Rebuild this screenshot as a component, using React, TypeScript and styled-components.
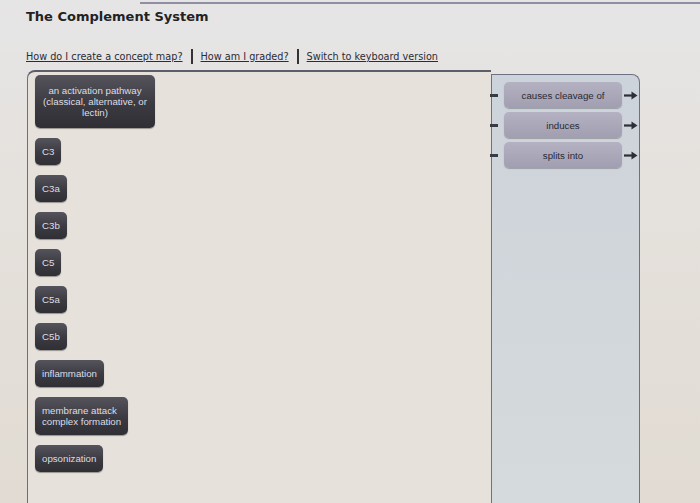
import styled, { createGlobalStyle } from "styled-components";

const GlobalStyle = createGlobalStyle`
  html, body {
    margin: 0;
    padding: 0;
    background: #e4e0da;
  }
  #root {
    width: 700px;
    height: 503px;
    overflow: hidden;
  }
`;

const Page = styled.div`
  width: 700px;
  height: 503px;
  display: flex;
  flex-direction: column;
  background: linear-gradient(180deg, #e6e5e6 0%, #e5e1dc 40%, #e1dbd3 100%);
  font-family: "Liberation Sans", Arial, sans-serif;
`;

const TopRule = styled.div`
  height: 2px;
  margin-top: 2px;
  margin-left: 140px;
  background: #8f8ea3;
`;

const Title = styled.h1`
  margin: 5px 0 0 26px;
  font-family: "DejaVu Sans", Verdana, sans-serif;
  font-size: 13px;
  font-weight: bold;
  color: #222;
`;

const LinkBar = styled.div`
  display: flex;
  align-items: center;
  margin: 25px 0 0 26px;
  font-family: "DejaVu Sans", Verdana, sans-serif;
  font-size: 9.7px;
`;

const HelpLink = styled.a`
  color: #2c2c34;
  text-decoration: underline;
  cursor: pointer;
`;

const Divider = styled.span`
  display: inline-block;
  width: 2px;
  height: 15px;
  margin: 0 8px;
  background: #333;
`;

const Panel = styled.div`
  flex: 1;
  display: flex;
  margin: 6px 60px 0 27px;
`;

const Canvas = styled.div`
  flex: 1;
  display: flex;
  flex-direction: column;
  align-items: flex-start;
  gap: 10px;
  padding: 3px 0 0 7px;
  border-top: 2px solid #5e5d6a;
  border-left: 1px solid #6f6e7c;
  border-top-left-radius: 8px;
  background: #e6e2db;
`;

const Node = styled.div<{ $wide?: boolean }>`
  box-sizing: border-box;
  width: ${(p) => (p.$wide ? "120px" : "auto")};
  min-width: 24px;
  padding: ${(p) => (p.$wide ? "10px 4px" : "8px 7px")};
  border-radius: 5px;
  background: linear-gradient(180deg, #55545c 0%, #3b3a41 55%, #2f2f35 100%);
  box-shadow: 0 1px 1px rgba(0, 0, 0, 0.35);
  color: #dedee3;
  font-size: 9.7px;
  line-height: 11px;
  text-align: ${(p) => (p.$wide ? "center" : "left")};
  white-space: pre-line;
  cursor: grab;
`;

const Sidebar = styled.div`
  width: 147px;
  margin-top: 4px;
  display: flex;
  flex-direction: column;
  gap: 4px;
  padding-top: 7px;
  border: 1px solid #707084;
  border-bottom: none;
  border-top-right-radius: 8px;
  background: linear-gradient(180deg, #cdd3da 0%, #d5dadc 100%);
`;

const LinkRow = styled.div`
  display: flex;
  align-items: center;
`;

const Dash = styled.span`
  width: 8px;
  height: 3px;
  margin-left: -2px;
  background: #3a3a44;
`;

const LinkPill = styled.div`
  width: 118px;
  height: 26px;
  margin-left: 6px;
  display: flex;
  align-items: center;
  justify-content: center;
  border-radius: 5px;
  background: linear-gradient(180deg, #b4b1c2 0%, #a19eb1 100%);
  box-shadow: 0 1px 1px rgba(0, 0, 0, 0.25);
  color: #2a2a33;
  font-size: 9.7px;
  cursor: grab;
`;

const Arrow = () => (
  <svg width="14" height="9" viewBox="0 0 14 9" style={{ marginLeft: 2 }}>
    <path d="M0 4.5 H10" stroke="#2e2e38" strokeWidth="2.2" />
    <path d="M7.5 0.5 L13.5 4.5 L7.5 8.5 Z" fill="#2e2e38" />
  </svg>
);

const concepts = [
  { label: "an activation pathway\n(classical, alternative, or\nlectin)", wide: true },
  { label: "C3" },
  { label: "C3a" },
  { label: "C3b" },
  { label: "C5" },
  { label: "C5a" },
  { label: "C5b" },
  { label: "inflammation" },
  { label: "membrane attack\ncomplex formation" },
  { label: "opsonization" },
];

const linkLabels = ["causes cleavage of", "induces", "splits into"];

const App = () => {
  return (
    <>
      <GlobalStyle />
      <Page>
        <TopRule />
        <Title>The Complement System</Title>
        <LinkBar>
          <HelpLink>How do I create a concept map?</HelpLink>
          <Divider />
          <HelpLink>How am I graded?</HelpLink>
          <Divider />
          <HelpLink>Switch to keyboard version</HelpLink>
        </LinkBar>
        <Panel>
          <Canvas>
            {concepts.map((c) => (
              <Node key={c.label} $wide={c.wide}>
                {c.label}
              </Node>
            ))}
          </Canvas>
          <Sidebar>
            {linkLabels.map((label) => (
              <LinkRow key={label}>
                <Dash />
                <LinkPill>{label}</LinkPill>
                <Arrow />
              </LinkRow>
            ))}
          </Sidebar>
        </Panel>
      </Page>
    </>
  );
};

export default App;
